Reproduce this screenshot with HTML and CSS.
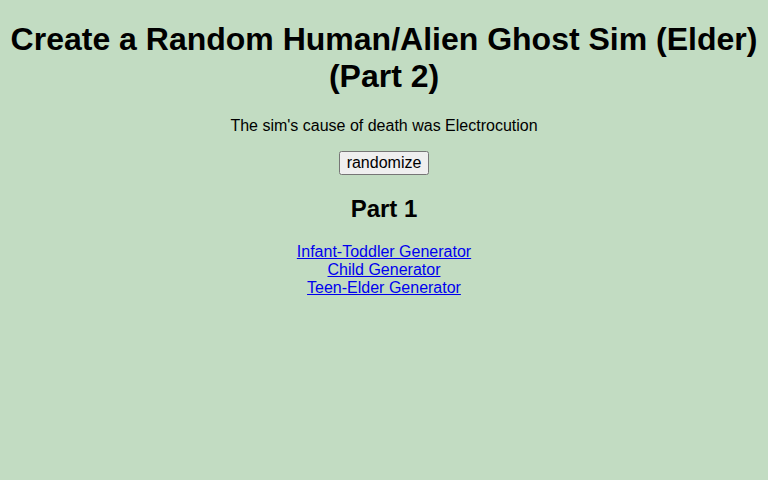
FILE: index.html
```html
<!DOCTYPE html>
<html lang="en">
<head>
  <meta charset="UTF-8">
  <meta name="viewport" content="width=device-width, initial-scale=1">
  <title>Random Human/Alien Ghost Sim (Elder) Part 2</title>
  <link rel="stylesheet" href="styles.css">
</head>
<body>

<h1>Create a Random Human/Alien Ghost Sim (Elder) (Part 2)</h1>

<p id="death">The sim's cause of death was Electrocution</p>

<div class="controls">
  <button class="random-button" onclick="randomize()">randomize</button>
</div>

<h2>Part 1</h2>

<div class="links">
  <a href="#">Infant-Toddler Generator</a><br>
  <a href="#">Child Generator</a><br>
  <a href="#">Teen-Elder Generator</a>
</div>

<script>
  const causes = ['Electrocution', 'Fire', 'Drowning', 'Starvation', 'Old Age', 'Satellite', 'Flies', 'Cowplant', 'Laughter', 'Overheating', 'Freezing'];

  function randomize() {
    const cause = causes[Math.floor(Math.random() * causes.length)];
    document.getElementById('death').textContent = "The sim's cause of death was " + cause;
  }
</script>

</body>
</html>
```

FILE: styles.css
```css
body {
  font-family: "Liberation Sans", Arial, sans-serif;
  background: #c2dcc2;
  color: #000;
  text-align: center;
  margin: 0 8px;
}

h1 {
  font-size: 32px;
  margin: 21.44px 0;
}

h2 {
  font-size: 24px;
  margin: 19.92px 0;
}

p {
  margin: 21.44px 0 16px;
}

.random-button {
  font-family: inherit;
  font-size: 16px;
}

.links a {
  color: #0000ee;
}
```
